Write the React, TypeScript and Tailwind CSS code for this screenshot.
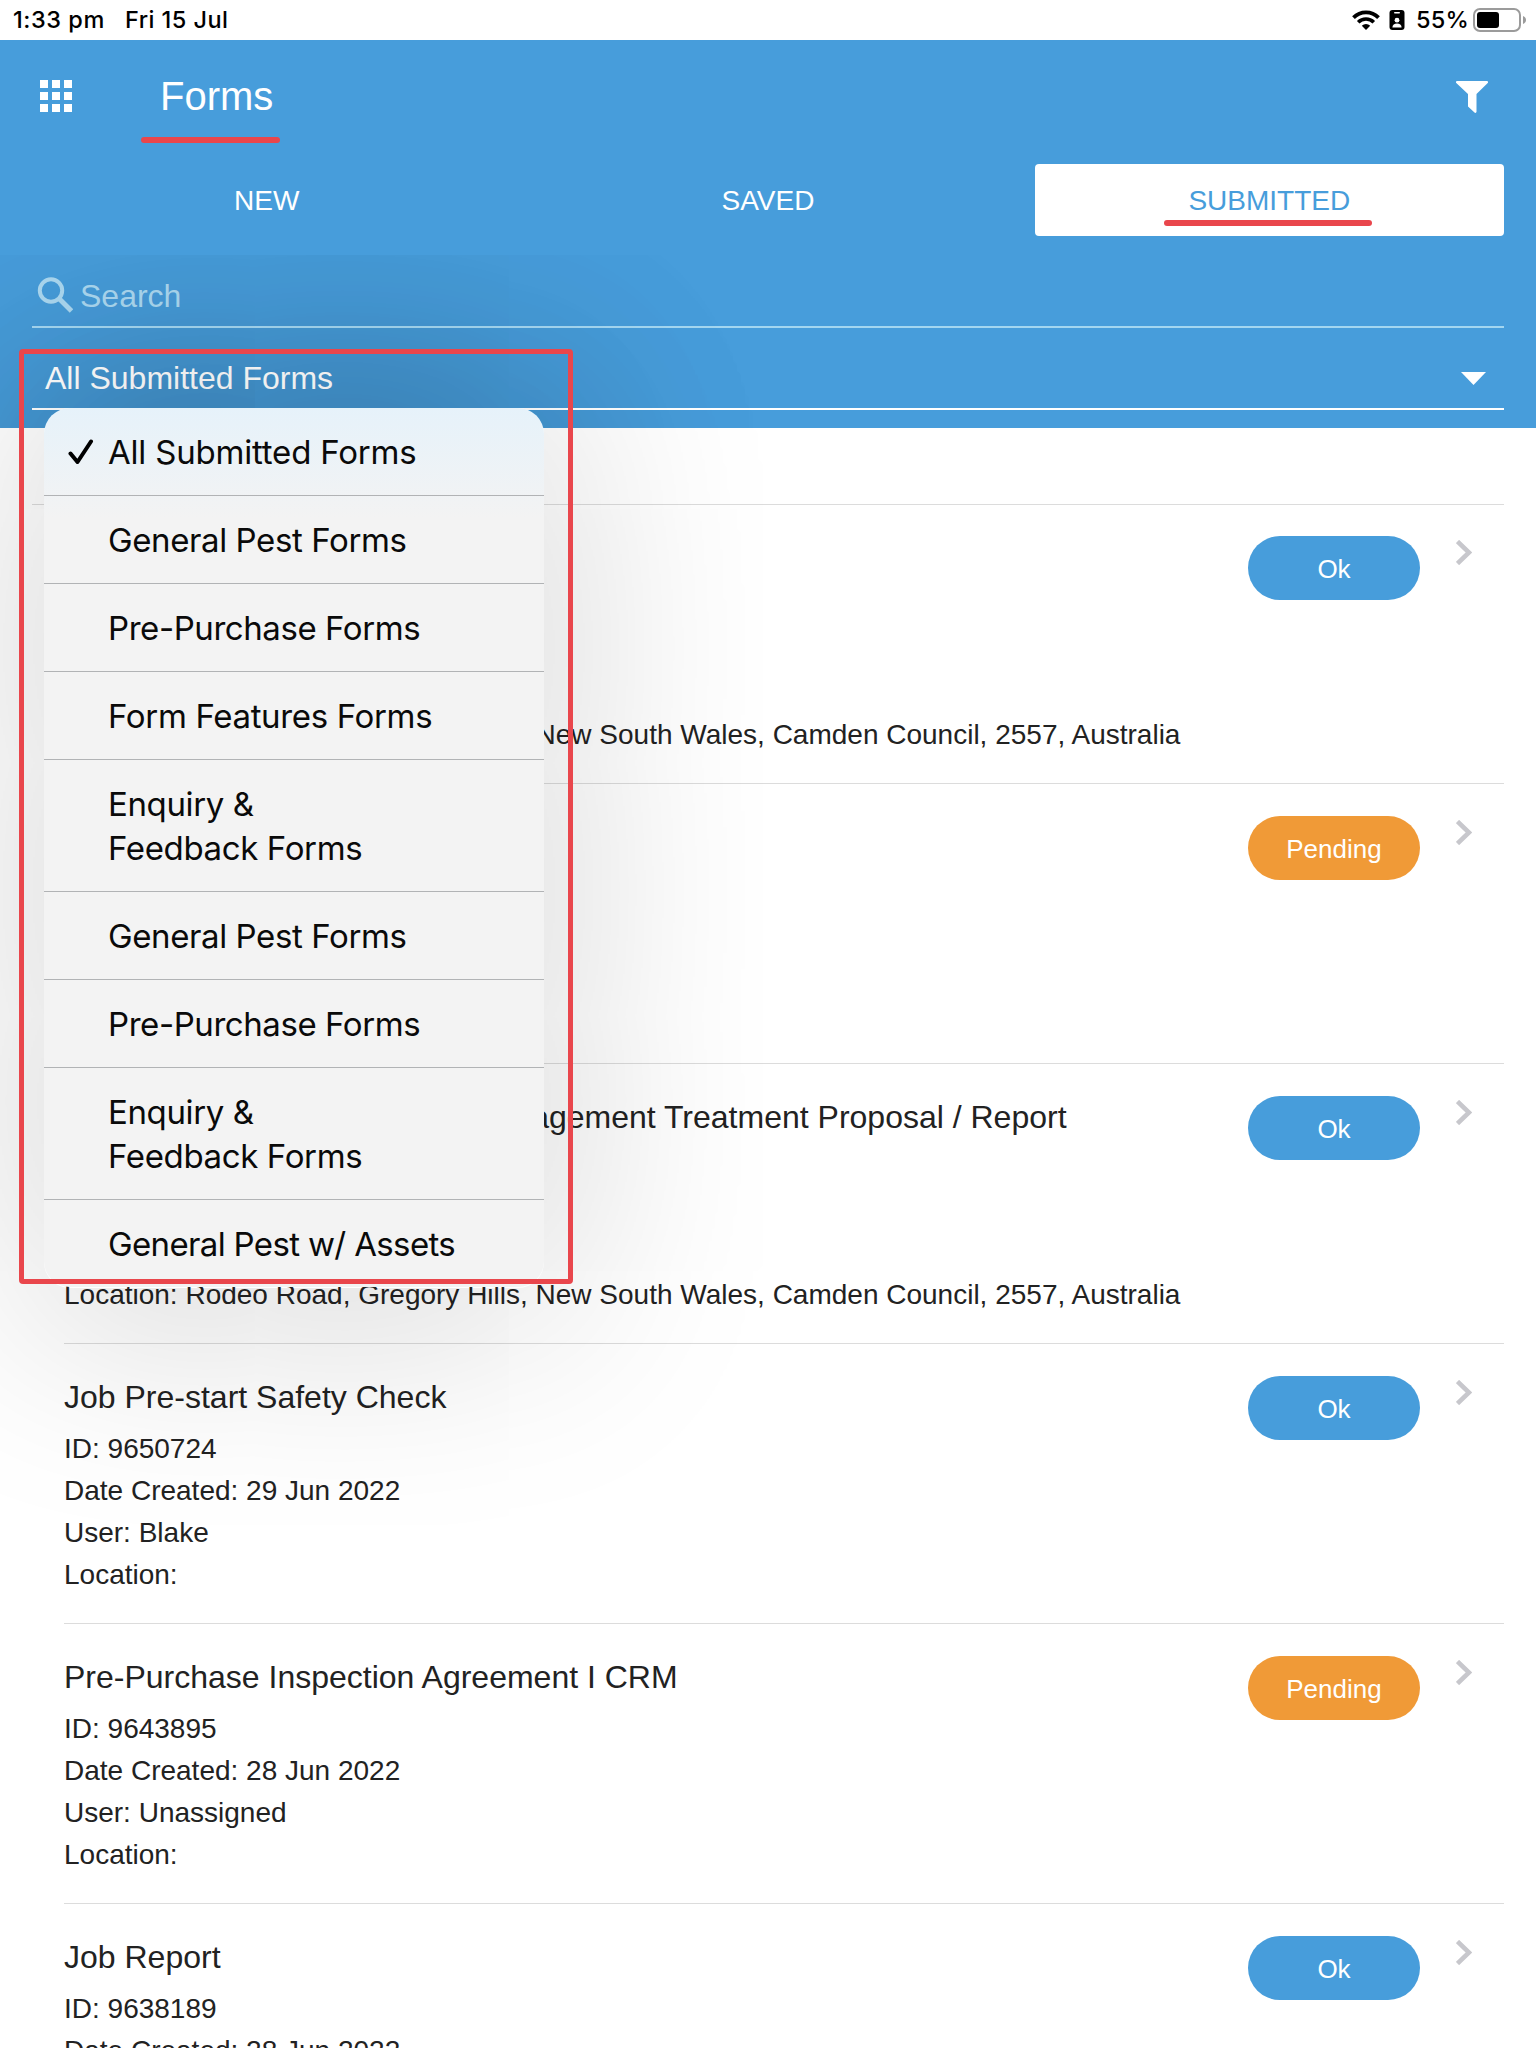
import { useState } from 'react';

type Status = 'Ok' | 'Pending';

interface FormEntry {
    title?: string;
    id?: string;
    date?: string;
    user?: string;
    location?: string;
    status: Status;
}

const ADDRESS = 'Rodeo Road, Gregory Hills, New South Wales, Camden Council, 2557, Australia';

const entries: FormEntry[] = [
    { location: ADDRESS, status: 'Ok' },
    { status: 'Pending' },
    { title: 'Construction Termite & Pest Management Treatment Proposal / Report', location: ADDRESS, status: 'Ok' },
    { title: 'Job Pre-start Safety Check', id: '9650724', date: '29 Jun 2022', user: 'Blake', location: '', status: 'Ok' },
    { title: 'Pre-Purchase Inspection Agreement I CRM', id: '9643895', date: '28 Jun 2022', user: 'Unassigned', location: '', status: 'Pending' },
    { title: 'Job Report', id: '9638189', date: '28 Jun 2022', user: 'Blake', location: '', status: 'Ok' },
];

const tabs = ['NEW', 'SAVED', 'SUBMITTED'];

const options = [
    { label: 'All Submitted Forms', tracking: 'tracking-[-0.2px]' },
    { label: 'General Pest Forms', tracking: 'tracking-[-0.4px]' },
    { label: 'Pre-Purchase Forms', tracking: 'tracking-[-0.43px]' },
    { label: 'Form Features Forms', tracking: 'tracking-[-0.34px]' },
    { label: 'Enquiry &\nFeedback Forms', tracking: 'tracking-[-0.37px]' },
    { label: 'General Pest Forms', tracking: 'tracking-[-0.4px]' },
    { label: 'Pre-Purchase Forms', tracking: 'tracking-[-0.43px]' },
    { label: 'Enquiry &\nFeedback Forms', tracking: 'tracking-[-0.37px]' },
    { label: 'General Pest w/ Assets', tracking: 'tracking-[-0.65px]' },
];

const StatusBar = () => (
    <div className="flex h-10 items-center bg-white pr-[9px] pl-[13px] font-['Inter',sans-serif] text-[23.5px] leading-none font-medium text-black">
        <span className="w-[112px] tracking-[0.55px] whitespace-nowrap">1:33 pm</span>
        <span className="tracking-[0.45px] whitespace-nowrap">Fri 15 Jul</span>
        <div className="ml-auto flex items-center">
            <svg className="h-5 w-7" viewBox="0 0 28 20">
                <path d="M1.500 7.600a17.500 17.500 0 0 1 25 0" fill="none" stroke="#000" strokeWidth="3.800" />
                <path d="M6.200 12.200a11 11 0 0 1 15.600 0" fill="none" stroke="#000" strokeWidth="3.600" />
                <path d="M14 20l-4.200-4.300a6 6 0 0 1 8.400 0z" />
            </svg>
            <svg className="ml-[9px] h-5 w-4" viewBox="0 0 16 20">
                <rect x="0.5" width="15" height="20" rx="3" />
                <rect x="5" y="2" width="6" height="1.6" rx="0.8" fill="#fff" />
                <circle cx="8" cy="10.2" r="2.4" fill="#fff" />
                <path d="M3.400 17.600c0-2.600 2-4 4.600-4s4.600 1.400 4.600 4z" fill="#fff" />
            </svg>
            <span className="ml-[11px] w-[53px] tracking-[0.2px] whitespace-nowrap">55%</span>
            <svg className="ml-[4px] h-6 w-[54px]" viewBox="0 0 54 24">
                <rect x="1" y="1" width="46" height="22" rx="6" fill="none" stroke="#9b9b9b" strokeWidth="2" />
                <rect x="4" y="4" width="22" height="16" rx="3" />
                <path d="M50 8c2 .8 3 2.200 3 4s-1 3.200-3 4z" fill="#9b9b9b" />
            </svg>
        </div>
    </div>
);

const FormRow = ({ entry }: { entry: FormEntry }) => (
    <li className="ml-8 flex h-[280px] items-start border-b border-[#dcdcdc] pt-8">
        <div className="min-w-0 flex-1 text-[28px] leading-[42px] whitespace-nowrap text-[#222]">
            <h2 className="h-[52px] text-[32px]">{entry.title}</h2>
            <p className="h-[42px]">{entry.id && `ID: ${entry.id}`}</p>
            <p className="h-[42px]">{entry.date && `Date Created: ${entry.date}`}</p>
            <p className="h-[42px]">{entry.user && `User: ${entry.user}`}</p>
            <p className="h-[42px]">{entry.location !== undefined && `Location: ${entry.location}`}</p>
        </div>
        <span
            className={
                entry.status === 'Ok'
                    ? 'flex h-16 w-[172px] items-center justify-center rounded-full bg-[#479ddb] pt-[2px] text-[26px] text-white'
                    : 'flex h-16 w-[172px] items-center justify-center rounded-full bg-[#f09a37] pt-[2px] text-[26px] text-white'
            }
        >
            {entry.status}
        </span>
        <svg className="mt-1 mr-8 ml-9 h-[25px] w-4" viewBox="0 0 16 25">
            <path d="M1.500 1.500L13 12.500L1.500 23.500" fill="none" stroke="#c7c7cc" strokeWidth="4.600" />
        </svg>
    </li>
);

const OptionMenu = ({ selected, onSelect }: { selected: number; onSelect: (i: number) => void }) => (
    <ul className="absolute top-[57px] left-3 z-20 w-[500px] overflow-hidden rounded-[26px] bg-[#f3f3f3] bg-[linear-gradient(#e6f2fa,#f3f3f3_110px)] font-['Inter',sans-serif] text-[33px] leading-[44px] text-[#0a0a0a]">
        {options.map((option, i) => (
            <li
                key={i}
                onClick={() => onSelect(i)}
                className="flex items-center border-b border-[#b1b3b5] pt-[22px] pb-[21px] last:border-b-0"
            >
                <span className="w-16 pl-6">
                    {selected === i && (
                        <svg className="h-[26px] w-[26px]" viewBox="0 0 26 26">
                            <path d="M2.500 14.500L9.500 23L23 2.500" fill="none" stroke="#000" strokeWidth="4" strokeLinecap="round" strokeLinejoin="round" />
                        </svg>
                    )}
                </span>
                <span className={`whitespace-pre ${option.tracking}`}>{option.label}</span>
            </li>
        ))}
    </ul>
);

const App = () => {
    const [activeTab, setActiveTab] = useState('SUBMITTED');
    const [selected, setSelected] = useState(0);

    return (
        <div className="relative h-[2048px] w-[1536px] overflow-hidden bg-white font-['Liberation_Sans',Arial,sans-serif]">
            <StatusBar />

            <header className="relative h-[388px] bg-[#479ddb] px-8 text-white">
                {/* extra shade of the open menu on the blue bar */}
                <div className="pointer-events-none absolute inset-0 overflow-hidden">
                    <div className="absolute top-[368px] left-11 h-[880px] w-[500px] rounded-[26px] shadow-[0_0_220px_20px_rgba(0,0,0,0.17)]" />
                </div>

                <div className="relative flex h-[124px] items-start pt-10">
                    <svg className="ml-2 h-8 w-8" viewBox="0 0 32 32" fill="#fff">
                        {[0, 12, 24].map((y) => [0, 12, 24].map((x) => <rect key={x + '-' + y} x={x} y={y} width="8" height="8" />))}
                    </svg>
                    <h1 className="-mt-[7px] ml-[88px] text-[40px] leading-[46px]">Forms</h1>
                    <svg className="mt-px mr-4 ml-auto h-8 w-8" viewBox="0 0 32 32" fill="#fff">
                        <path d="M1 0h30q1 0 1 1v.8L20.500 13V31q-1 1.500-2 .6L12 25.500V13L0 1.800V1q0-1 1-1z" />
                    </svg>
                    <div className="absolute top-[97px] left-[109px] h-[6px] w-[139px] rounded-full bg-[#e9464c]" />
                </div>

                <nav className="relative grid grid-cols-3 gap-8">
                    {tabs.map((tab) => (
                        <button
                            key={tab}
                            onClick={() => setActiveTab(tab)}
                            className={
                                tab === activeTab
                                    ? 'relative h-[72px] rounded bg-white pt-[2px] text-[28px] text-[#479ddb]'
                                    : 'relative h-[72px] rounded pt-[2px] text-[28px] text-white'
                            }
                        >
                            {tab}
                            {tab === activeTab && <span className="absolute top-[56px] left-[129px] h-[6px] w-[208px] rounded-full bg-[#e9464c]" />}
                        </button>
                    ))}
                </nav>

                <div className="relative mt-6 flex h-[68px] items-center border-b-2 border-[#a3d6f0] text-[#a9d6ee]">
                    <svg className="mt-[3px] ml-[5px] h-9 w-9" viewBox="0 0 36 36" fill="none" stroke="currentColor">
                        <circle cx="14" cy="13.500" r="11.200" strokeWidth="4" />
                        <path d="M22 21.500L34.500 34" strokeWidth="5" />
                    </svg>
                    <span className="ml-[7px] pt-[5px] text-[32px] leading-[40px]">Search</span>
                </div>

                <div className="relative flex h-[82px] items-center border-b-2 border-white">
                    <span className="ml-[13px] pt-[20px] text-[32px] leading-[40px]">{options[selected].label}</span>
                    <svg className="mt-[20px] mr-[18px] ml-auto h-[13px] w-[25px]" viewBox="0 0 25 13" fill="#fff">
                        <path d="M0 0h25L12.500 13z" />
                    </svg>
                </div>
            </header>

            <main className="px-8">
                <div className="-mb-px h-[77px] border-b border-[#dcdcdc]" />
                <ul>
                    {entries.map((entry, i) => (
                        <FormRow key={i} entry={entry} />
                    ))}
                </ul>
            </main>

            {/* menu floats over the list, right under the select */}
            <div className="absolute top-[351px] left-8">
                <div className="absolute top-[57px] left-3 h-[880px] w-[500px] rounded-[26px] shadow-[0_10px_220px_20px_rgba(0,0,0,0.18)]" />
                <OptionMenu selected={selected} onSelect={setSelected} />
            </div>
            <div className="pointer-events-none absolute top-[349px] left-[19px] z-30 h-[935px] w-[554px] rounded border-[5px] border-[#e9464c]" />
        </div>
    );
};

export default App;
